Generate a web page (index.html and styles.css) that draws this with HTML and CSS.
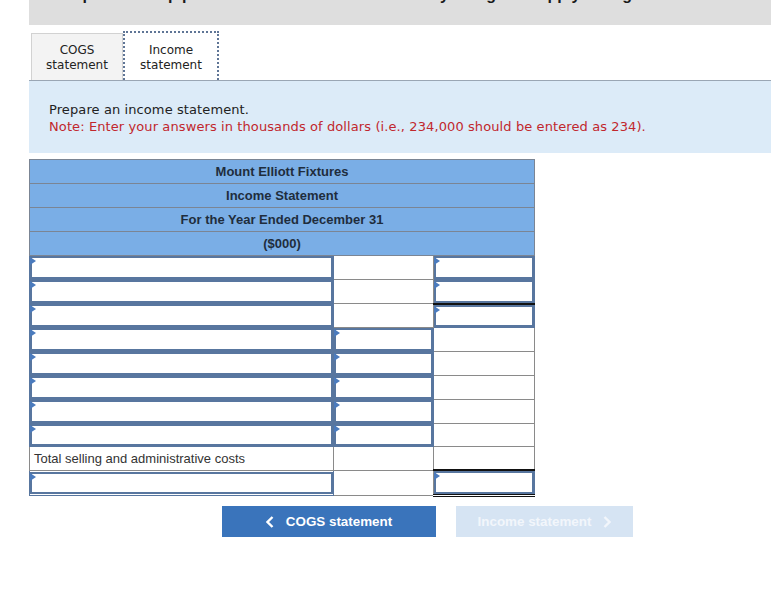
FILE: index.html
```html
<!DOCTYPE html>
<html lang="en">
<head>
    <meta charset="UTF-8" />
    <title>Income statement</title>
    <link rel="stylesheet" href="styles.css">
</head>
<body>
<div class="page">
    <div class="q-bar">
        <p>Complete the top portion of the income statement by using the supply data given.</p>
    </div>

    <div class="tabs">
        <div class="tab">COGS<br>statement</div>
        <div class="tab tab-active">Income<br>statement</div>
    </div>

    <div class="instructions">
        <p>Prepare an income statement.</p>
        <p class="note">Note: Enter your answers in thousands of dollars (i.e., 234,000 should be entered as 234).</p>
    </div>

    <table class="statement">
        <colgroup>
            <col class="c-label">
            <col class="c-mid">
            <col class="c-total">
        </colgroup>
        <thead>
            <tr><th colspan="3">Mount Elliott Fixtures</th></tr>
            <tr><th colspan="3">Income Statement</th></tr>
            <tr><th colspan="3">For the Year Ended December 31</th></tr>
            <tr><th colspan="3">($000)</th></tr>
        </thead>
        <tbody>
            <tr>
                <td class="in"><div class="field"><input type="text"></div></td>
                <td></td>
                <td class="in"><div class="field"><input type="text"></div></td>
            </tr>
            <tr>
                <td class="in"><div class="field"><input type="text"></div></td>
                <td></td>
                <td class="in"><div class="field"><input type="text"></div></td>
            </tr>
            <tr>
                <td class="in"><div class="field"><input type="text"></div></td>
                <td></td>
                <td class="in rule-top"><div class="field"><input type="text"></div></td>
            </tr>
            <tr>
                <td class="in"><div class="field"><input type="text"></div></td>
                <td class="in"><div class="field"><input type="text"></div></td>
                <td></td>
            </tr>
            <tr>
                <td class="in"><div class="field"><input type="text"></div></td>
                <td class="in"><div class="field"><input type="text"></div></td>
                <td></td>
            </tr>
            <tr>
                <td class="in"><div class="field"><input type="text"></div></td>
                <td class="in"><div class="field"><input type="text"></div></td>
                <td></td>
            </tr>
            <tr>
                <td class="in"><div class="field"><input type="text"></div></td>
                <td class="in"><div class="field"><input type="text"></div></td>
                <td></td>
            </tr>
            <tr>
                <td class="in"><div class="field"><input type="text"></div></td>
                <td class="in"><div class="field"><input type="text"></div></td>
                <td></td>
            </tr>
            <tr>
                <td class="label">Total selling and administrative costs</td>
                <td></td>
                <td></td>
            </tr>
            <tr>
                <td class="in"><div class="field"><input type="text"></div></td>
                <td></td>
                <td class="in rule-top double-bottom"><div class="field"><input type="text"></div></td>
            </tr>
        </tbody>
    </table>

    <div class="nav">
        <button class="btn btn-prev">
            <svg width="8" height="12" viewBox="0 0 8 12"><polyline points="6.5,1 1.5,6 6.5,11" fill="none" stroke="currentColor" stroke-width="2.4"/></svg>
            COGS statement
        </button>
        <button class="btn btn-next">
            Income statement
            <svg width="8" height="12" viewBox="0 0 8 12"><polyline points="1.5,1 6.5,6 1.5,11" fill="none" stroke="currentColor" stroke-width="2.4"/></svg>
        </button>
    </div>
</div>
</body>
</html>
```

FILE: styles.css
```css
body {
    margin: 0;
    background-color: #FFFFFF;
    font-family: "DejaVu Sans", Verdana, sans-serif;
    color: #222;
}
.page {
    margin-left: 29px;
}
.q-bar {
    height: 25px;
    background-color: #DEDEDE;
    overflow: hidden;
    padding-left: 18px;
}
.q-bar p {
    margin: -15px 0 0;
    font: bold 16px/20px "Liberation Sans", Arial, sans-serif;
    color: #1a1a1a;
    white-space: nowrap;
}
.tabs {
    display: flex;
    align-items: flex-end;
    margin-top: 6px;
    padding-left: 2px;
    border-bottom: 1px solid #9AA6B4;
}
.tab {
    width: 92px;
    height: 47px;
    box-sizing: border-box;
    padding-top: 2px;
    border: 1px solid #D2D2D2;
    border-bottom: none;
    background-color: #F3F3F3;
    display: flex;
    align-items: center;
    justify-content: center;
    text-align: center;
    font-size: 12px;
    line-height: 15px;
    color: #222;
}
.tab-active {
    width: 96px;
    height: 49px;
    background-color: #FFFFFF;
    border: 2px dotted #5F7596;
    border-bottom: none;
}
.instructions {
    height: 72px;
    box-sizing: border-box;
    padding: 20px 20px;
    background-color: #DCEBF8;
    font-size: 13px;
    line-height: 17px;
    letter-spacing: 0.1px;
}
.instructions p {
    margin: 0;
}
.instructions .note {
    color: #C1272D;
}
.statement {
    margin-top: 6px;
    width: 505px;
    table-layout: fixed;
    border-collapse: collapse;
    font-family: "Liberation Sans", Arial, sans-serif;
    font-size: 13px;
}
.c-label { width: 304px; }
.c-mid { width: 100px; }
.c-total { width: 101px; }
.statement th {
    height: 23px;
    padding: 0;
    background-color: #7AAEE6;
    border: 1px solid #7B8594;
    font-weight: bold;
    color: #1F2D3D;
    text-align: center;
}
.statement td {
    height: 22px;
    padding: 0;
    border: 1px solid #8A8A8A;
}
.statement td.in {
    border-color: #58769F;
}
.statement td.label {
    padding-left: 4px;
    color: #333;
}
.field {
    position: relative;
}
.field::before {
    content: "";
    position: absolute;
    left: 0;
    top: 1px;
    border-left: 6px solid #4B7BBD;
    border-top: 4px solid transparent;
    border-bottom: 4px solid transparent;
}
.field input {
    display: block;
    width: 100%;
    height: 22.8px;
    margin: 0;
    box-sizing: border-box;
    border: 2px solid #58769F;
    background-color: #FFFFFF;
}
.statement td.rule-top {
    border-top: 2px solid #111;
}
.statement td.double-bottom {
    border-bottom: 3px double #111;
}
.nav {
    display: flex;
    gap: 20px;
    margin: 9px 0 0 193px;
}
.btn {
    height: 31px;
    display: flex;
    align-items: center;
    justify-content: center;
    gap: 12px;
    border: none;
    padding: 0;
    font: bold 13.4px "Liberation Sans", Arial, sans-serif;
}
.btn-prev {
    width: 214px;
    background-color: #3A74BB;
    color: #FFFFFF;
}
.btn-next {
    width: 177px;
    background-color: #D6E4F3;
    color: #F2F6FB;
}
```
